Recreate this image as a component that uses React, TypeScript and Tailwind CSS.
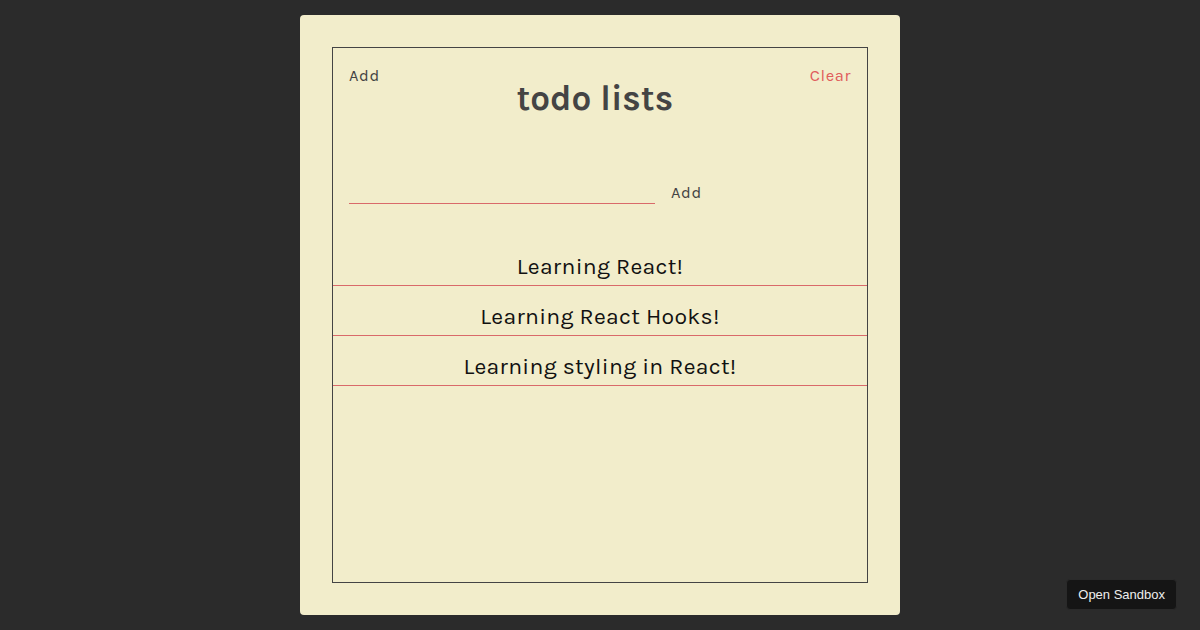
import { useState } from "react";

const initial = ["Learning React!", "Learning React Hooks!", "Learning styling in React!"];

export default function App() {
  const [todos, setTodos] = useState<string[]>(initial);
  const [text, setText] = useState("");

  const add = () => {
    if (!text.trim()) return;
    setTodos([...todos, text.trim()]);
    setText("");
  };

  return (
    <main className="relative h-[630px] w-[1200px] bg-[#2b2b2b] font-['Karla','Lato',sans-serif]">
      <div className="mx-auto pt-[15px] w-[600px]">
        <div className="h-[600px] rounded-[4px] bg-[#f2edcb] p-8">
          <div className="h-full border border-[#444] px-4 pt-[16px]">
            <div className="flex items-start justify-between">
              <button className="text-[16.5px] leading-[24px] tracking-[0.6px] text-[#444]" onClick={add}>
                Add
              </button>
              <h1 className="mt-[14px] text-[35px] font-bold leading-[42px] text-[#444]">todo lists</h1>
              <button
                className="text-[16.5px] leading-[24px] tracking-[0.6px] text-[#e05c5c]"
                onClick={() => setTodos([])}
              >
                Clear
              </button>
            </div>

            <div className="mt-[54px] flex items-end">
              <input
                value={text}
                onChange={(e) => setText(e.target.value)}
                className="h-[30px] w-[306px] border-b border-[#d96a6a] bg-transparent text-[16px] text-[#222] outline-none"
              />
              <button
                onClick={add}
                className="ml-4 text-[16.5px] leading-[22px] tracking-[0.6px] text-[#444]"
              >
                Add
              </button>
            </div>

            <ul className="-mx-4 mt-[32px]">
              {todos.map((t) => (
                <li
                  key={t}
                  className="border-b border-[#d96a6a] pt-[18px] pb-[5px] text-center text-[23px] leading-[26px] tracking-[0.3px] text-[#111]"
                >
                  {t}
                </li>
              ))}
            </ul>
          </div>
        </div>
      </div>

      <button className="absolute right-[23px] bottom-5 flex h-[31px] items-center rounded-[4px] border border-[#2a2a2a] bg-[#151515] px-[11px] font-['Liberation_Sans',Arial,sans-serif] text-[13px] leading-[17px] text-[#eee]">
        Open Sandbox
      </button>
    </main>
  );
}
